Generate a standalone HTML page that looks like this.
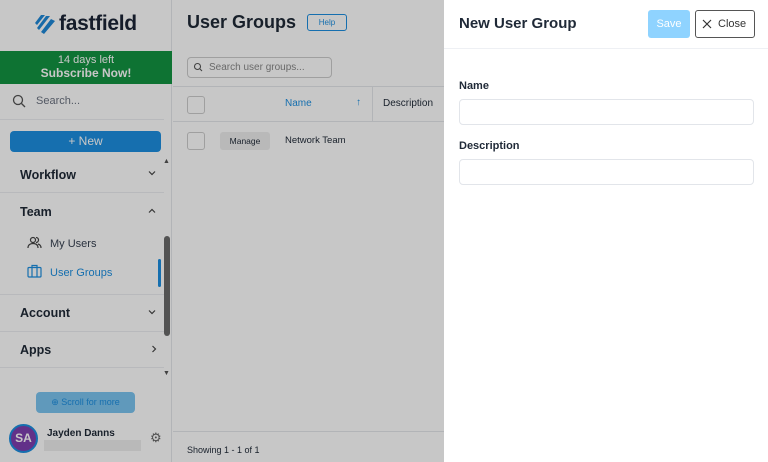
<!DOCTYPE html>
<html><head><style>
*{box-sizing:border-box;margin:0;padding:0}
body{width:768px;height:462px;overflow:hidden;position:relative;background:#fff;font-family:"Liberation Sans",sans-serif;color:#1f2937}
.sb{position:absolute;left:0;top:0;width:172px;height:462px;background:#fff;border-right:1px solid #e5e7eb}
.abs{position:absolute}
.logo{top:12px;font-size:21px;font-weight:bold;color:#1b2536;letter-spacing:-0.3px}
.green{left:0;top:51px;width:172px;height:33px;background:#139442;color:#fff;text-align:center;font-size:11px;line-height:13px;padding-top:3px}
.nav{left:20px;font-size:12.5px;font-weight:bold;color:#1f2937}
.hr{left:0;width:164px;height:1px;background:#eceef1}
.chev{left:148px}
.main{left:173px;top:0;width:280px;height:462px}
.ov{position:absolute;left:0;top:0;width:444px;height:462px;background:rgba(0,0,0,0.22)}
.panel{position:absolute;left:444px;top:0;width:324px;height:462px;background:#fff}
.inp{position:absolute;left:15px;width:295px;height:26px;border:1px solid #e2e5ea;border-radius:4px}
.lbl{position:absolute;left:15px;font-size:11px;font-weight:bold;color:#1f2937}
</style></head><body>
<div class="sb">
 <div class="abs" style="left:34px;top:13px">
  <svg width="22" height="22" viewBox="0 0 22 22"><g fill="#1e88d8"><polygon points="7,2 11,2 3,12 1,10"/><polygon points="12,3 16,3 5,17 3,15"/><polygon points="17,6 21,8 10,21 7,19"/></g></svg></div>
 <div class="abs logo" style="left:59px">fastfield</div>
 <div class="abs green">14 days left<br><b style="font-size:12px">Subscribe Now!</b></div>
 <svg class="abs" style="left:12px;top:94px" width="14" height="14" viewBox="0 0 14 14"><circle cx="6" cy="6" r="4.5" fill="none" stroke="#555" stroke-width="1.3"/><line x1="9.5" y1="9.5" x2="13" y2="13" stroke="#555" stroke-width="1.3"/></svg>
 <div class="abs" style="left:36px;top:95px;font-size:11px;color:#6b7280">Search...</div>
 <div class="abs hr" style="top:119px"></div>
 <div class="abs" style="left:10px;top:131px;width:151px;height:21px;background:#1d8fe0;border-radius:4px;color:#fff;text-align:center;font-size:12px;line-height:21px">+ New</div>
 <div class="abs nav" style="top:168px">Workflow</div>
 <svg class="abs chev" style="top:170px" width="8" height="6" viewBox="0 0 8 6"><path d="M1 1.5L4 4.5L7 1.5" fill="none" stroke="#444" stroke-width="1.2"/></svg>
 <div class="abs hr" style="top:192px"></div>
 <div class="abs nav" style="top:205px">Team</div>
 <svg class="abs chev" style="top:208px" width="8" height="6" viewBox="0 0 8 6"><path d="M1 4.5L4 1.5L7 4.5" fill="none" stroke="#444" stroke-width="1.2"/></svg>
 <svg class="abs" style="left:27px;top:236px" width="15" height="13" viewBox="0 0 15 13"><g fill="none" stroke="#444" stroke-width="1.2"><circle cx="6" cy="4" r="2.5"/><path d="M1 12c0-3 2-4.5 5-4.5s5 1.5 5 4.5"/><path d="M9 1.5a2.5 2.5 0 0 1 0 5M11 8c2 .5 3 2 3 4"/></g></svg>
 <div class="abs" style="left:50px;top:238px;font-size:11px;color:#374151">My Users</div>
 <svg class="abs" style="left:27px;top:264px" width="15" height="14" viewBox="0 0 15 14"><g fill="none" stroke="#1d8fe0" stroke-width="1.2"><rect x="1" y="3.5" width="13" height="9.5" rx="1"/><path d="M5 3.5V1.5h5v2M5 3.5v9.5M10 3.5v9.5"/></g></svg>
 <div class="abs" style="left:50px;top:267px;font-size:11px;color:#1d8fe0">User Groups</div>
 <div class="abs" style="left:158px;top:259px;width:3px;height:28px;background:#1d8fe0;border-radius:2px"></div>
 <div class="abs hr" style="top:294px"></div>
 <div class="abs nav" style="top:306px">Account</div>
 <svg class="abs chev" style="top:309px" width="8" height="6" viewBox="0 0 8 6"><path d="M1 1.5L4 4.5L7 1.5" fill="none" stroke="#444" stroke-width="1.2"/></svg>
 <div class="abs hr" style="top:331px"></div>
 <div class="abs nav" style="top:343px">Apps</div>
 <svg class="abs" style="left:151px;top:345px" width="6" height="8" viewBox="0 0 6 8"><path d="M1.5 1L4.5 4L1.5 7" fill="none" stroke="#444" stroke-width="1.2"/></svg>
 <div class="abs hr" style="top:367px"></div>
 <div class="abs" style="left:163px;top:158px;font-size:7px;color:#555">▲</div>
 <div class="abs" style="left:163px;top:370px;font-size:7px;color:#555">▼</div>
 <div class="abs" style="left:164px;top:236px;width:6px;height:100px;background:#6b6b6b;border-radius:3px"></div>
 <div class="abs" style="left:36px;top:392px;width:99px;height:21px;background:#7cc4f0;border-radius:4px;color:#1d8fe0;font-size:9px;text-align:center;line-height:21px">⊕ Scroll for more</div>
 <div class="abs" style="left:9px;top:424px;width:29px;height:29px;border-radius:50%;background:#7e3fb0;border:2px solid #1d8fe0;color:#fff;font-weight:bold;font-size:12px;text-align:center;line-height:25px">SA</div>
 <div class="abs" style="left:47px;top:428px;font-size:10px;font-weight:bold">Jayden Danns</div>
 <div class="abs" style="left:44px;top:440px;width:97px;height:11px;background:#eee"></div>
 <div class="abs" style="left:150px;top:430px;font-size:13px;color:#666">⚙</div>
</div>
<div class="abs main">
 <div class="abs" style="left:14px;top:12px;font-size:18px;font-weight:bold;color:#1f2937">User Groups</div>
 <div class="abs" style="left:134px;top:14px;width:40px;height:17px;border:1px solid #1d8fe0;border-radius:3px;font-size:8px;color:#1d8fe0;text-align:center;line-height:15px">Help</div>
 <div class="abs" style="left:14px;top:57px;width:145px;height:21px;border:1px solid #ccc;border-radius:4px;font-size:10px;color:#888;padding:4px 0 0 21px">Search user groups...</div>
 <svg class="abs" style="left:20px;top:62px" width="10" height="10" viewBox="0 0 10 10"><circle cx="4.5" cy="4.5" r="3" fill="none" stroke="#555" stroke-width="1.1"/><line x1="7" y1="7" x2="9" y2="9" stroke="#555" stroke-width="1.1"/></svg>
 <div class="abs" style="left:0;top:86px;width:280px;height:1px;background:#e5e7eb"></div>
 <div class="abs" style="left:14px;top:96px;width:18px;height:18px;border:1px solid #ccc;border-radius:3px"></div>
 <div class="abs" style="left:112px;top:98px;font-size:10px;color:#1d8fe0">Name</div>
 <div class="abs" style="left:183px;top:97px;font-size:10px;color:#1d8fe0">↑</div>
 <div class="abs" style="left:199px;top:87px;width:1px;height:35px;background:#e5e7eb"></div>
 <div class="abs" style="left:210px;top:98px;font-size:10px">Description</div>
 <div class="abs" style="left:0;top:121px;width:280px;height:1px;background:#e5e7eb"></div>
 <div class="abs" style="left:14px;top:132px;width:18px;height:18px;border:1px solid #ccc;border-radius:3px"></div>
 <div class="abs" style="left:47px;top:132px;width:50px;height:18px;background:#eee;border-radius:3px;font-size:8.5px;text-align:center;line-height:18px">Manage</div>
 <div class="abs" style="left:112px;top:135px;font-size:9.5px">Network Team</div>
 <div class="abs" style="left:0;top:431px;width:280px;height:1px;background:#e5e7eb"></div>
 <div class="abs" style="left:14px;top:445px;font-size:9px">Showing 1 - 1 of 1</div>
</div>
<div class="ov"></div>
<div class="panel">
 <div class="abs" style="left:15px;top:15px;font-size:15px;font-weight:bold;color:#1f2937">New User Group</div>
 <div class="abs" style="left:204px;top:10px;width:42px;height:28px;background:#8fd3ff;border-radius:3px;color:#fff;font-size:11px;text-align:center;line-height:28px">Save</div>
 <div class="abs" style="left:251px;top:10px;width:60px;height:28px;border:1px solid #555;border-radius:3px;font-size:11px;color:#333;line-height:26px"><svg class="abs" style="left:6px;top:8px" width="10" height="10" viewBox="0 0 10 10"><path d="M1 1L9 9M9 1L1 9" stroke="#333" stroke-width="1.2"/></svg><span style="position:absolute;left:22px">Close</span></div>
 <div class="abs" style="left:0;top:48px;width:324px;height:1px;background:#eef0f4"></div>
 <div class="lbl" style="top:80px">Name</div>
 <div class="inp" style="top:99px"></div>
 <div class="lbl" style="top:140px">Description</div>
 <div class="inp" style="top:159px"></div>
</div>
</body></html>
